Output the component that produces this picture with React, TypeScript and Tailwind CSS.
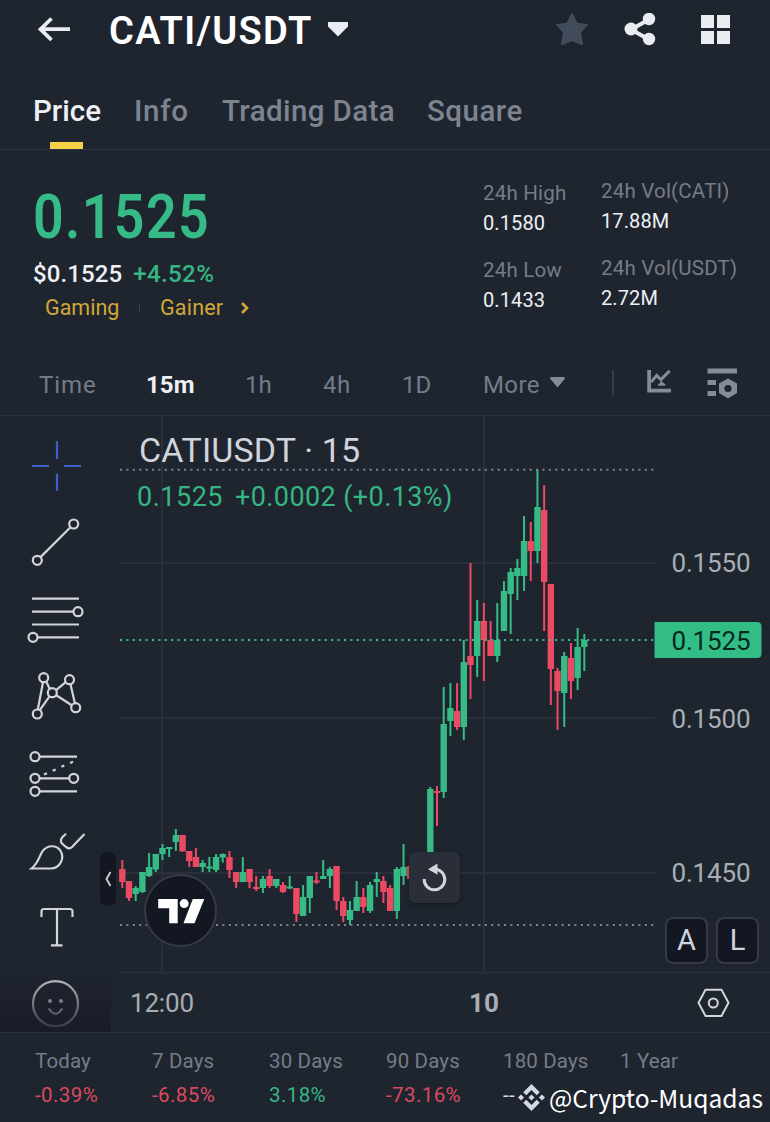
import clsx from "clsx";
import type { ReactNode } from "react";
import { SiBinance } from "react-icons/si";

type Candle = [high: number, low: number, top: number, bottom: number, up: 0 | 1];

const FIRST_X = 122.3;
const STEP = 6.696;
const CHART_TOP = 416;

const candles: (Candle | null)[] = [
  [860, 888, 869, 882, 0],
  [881, 901, 881, 898, 0],
  [886, 901, 888, 894, 1],
  [872, 893, 872, 892, 1],
  [853, 877, 867, 876, 1],
  [854, 872, 854, 869.5, 1],
  [844, 860, 848, 854, 1],
  [847, 857, 847, 849, 1],
  [829, 851, 835, 842, 1],
  [835, 851.5, 835, 851.5, 0],
  [851, 867, 851, 861, 0],
  [848, 867, 857, 867, 0],
  [860, 872, 863, 867, 1],
  [857, 872, 866.5, 868.5, 1],
  [854, 872, 857, 870, 1],
  [853.5, 862.5, 854, 857.5, 1],
  [851, 878, 857, 870, 0],
  [872, 888, 872, 882, 0],
  [857, 882, 872, 882, 1],
  [869, 888, 869, 882, 0],
  [876, 891, 887, 889, 0],
  [876, 893, 879, 888, 1],
  [869, 888, 876, 886, 0],
  [879, 888, 879, 886, 1],
  [882, 893, 885, 892, 0],
  [876, 889, 886.5, 888.5, 1],
  [888, 922, 888, 914, 0],
  [885, 916, 897, 916, 1],
  [876, 913, 876, 898, 1],
  [872, 884, 880.5, 882.5, 0],
  [860, 879, 876, 879, 1],
  [867, 888, 869, 876, 1],
  [866, 910, 866, 901, 0],
  [897, 922, 901, 916, 0],
  [901, 925, 910, 920, 1],
  [881, 911, 897, 911, 1],
  [888, 913, 897, 907, 0],
  [882, 913, 885, 911, 1],
  [872, 897, 879, 882, 1],
  [876, 903, 881, 892, 0],
  [885, 911, 888, 911, 0],
  [867, 919, 869, 911, 1],
  [844, 885, 867, 876, 1],
  [866, 879, 866, 879, 0],
  null,
  null,
  [787, 852, 789, 852, 1],
  [786, 826, 791, 793, 0],
  [687, 798, 724, 792, 1],
  [683, 736, 708, 721, 1],
  [683, 730, 711, 727, 0],
  [640, 740, 662, 727, 1],
  [563, 699, 656, 665, 0],
  [600, 677, 621, 656, 1],
  [603, 681, 621, 640, 0],
  [621, 656, 640, 656, 0],
  [603, 662, 640, 656, 1],
  [581, 631, 591, 631, 1],
  [568, 634, 572, 594, 1],
  [559, 600, 568, 576, 1],
  [516, 591, 541, 576, 1],
  [522, 581, 541, 551, 0],
  [470, 563, 507, 551, 1],
  [485, 631, 510, 582, 0],
  [584, 705, 584, 669, 0],
  [668, 730, 671, 691, 0],
  [652, 727, 656, 693, 1],
  [643, 699, 658, 681, 0],
  [628, 690, 647, 678, 1],
  [634, 671, 640, 647, 1],
];

const performance = [
  { label: "Today", value: "-0.39%", tone: "text-[#d9495f]" },
  { label: "7 Days", value: "-6.85%", tone: "text-[#d9495f]" },
  { label: "30 Days", value: "3.18%", tone: "text-[#35b582]" },
  { label: "90 Days", value: "-73.16%", tone: "text-[#d9495f]" },
  { label: "180 Days", value: "--", tone: "text-[#d5d9e0]" },
  { label: "1 Year", value: "--", tone: "text-[#d5d9e0]" },
];

function Header() {
  return (
    <header className="flex h-[60px] items-center">
      <svg className="ml-[37px] h-[28px] w-[34px]" viewBox="0 0 34 28" fill="none" stroke="#e9ecf1" strokeWidth="3.8">
        <path d="M14.5 2.5 3.5 13.2l11 10.8M3.5 13.2H33" />
      </svg>
      <h1 className="ml-[38px] w-[203px] whitespace-nowrap pt-[2px] text-[38px] font-semibold leading-none tracking-[1.3px] text-white">
        CATI/USDT
      </h1>
      <svg className="ml-[15px] h-[16px] w-[22px]" viewBox="0 0 22 16" fill="#e9ecf1">
        <path d="M1 0h20v4.5L11 14.5 1 4.5z" />
      </svg>
      <svg className="ml-[206px] h-[34px] w-[34px]" viewBox="0 0 34 34" fill="#434c5a" stroke="#434c5a" strokeWidth="1.6" strokeLinejoin="round">
        <path d="M17 1 22 10.500l10.200 1.200-7 7.600 2 12.200-10.200-4.200-10.200 4.200 2-12.200-7-7.600L12 10.500z" />
      </svg>
      <svg className="ml-[35px] h-[34px] w-[34px]" viewBox="0 0 34 34" fill="#e9ecf1">
        <path d="M25 6.500 7 16.500l18 10" fill="none" stroke="#e9ecf1" strokeWidth="4" />
        <circle cx="25" cy="6" r="6.2" />
        <circle cx="7" cy="16" r="6.5" />
        <circle cx="25" cy="26" r="6.2" />
      </svg>
      <div className="ml-[43px] grid grid-cols-2 gap-[3px] pb-[2px]">
        {[0, 1, 2, 3].map((n) => (
          <span key={n} className="size-[13px] bg-[#e9ecf1]" />
        ))}
      </div>
    </header>
  );
}

function Tabs() {
  return (
    <nav className="flex h-[90px] border-b border-[#2d343f] text-[29.5px] font-medium leading-[30px] text-[#7d8490]">
      <div className="ml-[33px] flex w-[101px] flex-col pt-[36px] text-[#eef0f4]">
        <span>Price</span>
        <span className="ml-[17px] mt-[16px] h-[7px] w-[33px] bg-[#f5d147]" />
      </div>
      <span className="w-[88px] pt-[36px] tracking-[0.7px]">Info</span>
      <span className="w-[205px] whitespace-nowrap pt-[36px] tracking-[0.4px]">Trading Data</span>
      <span className="pt-[36px] tracking-[0.5px]">Square</span>
    </nav>
  );
}

function Stat({ label, value }: { label: string; value: string }) {
  return (
    <div className="h-[77px] whitespace-nowrap leading-[30px]">
      <p className="text-[20.5px] tracking-[0.2px] text-[#757c89]">{label}</p>
      <p className="text-[20px] tracking-[0.1px] text-[#eef0f4]">{value}</p>
    </div>
  );
}

function Summary() {
  return (
    <section className="flex h-[200px]">
      <div className="w-[450px] pl-[33px] pt-[36px]">
        <p className="origin-left scale-x-[0.88] text-[61px] font-semibold leading-[62px] tracking-[1.6px] text-[#36bb86]">
          0.1525
        </p>
        <p className="mt-[11px] flex gap-[11px] text-[24px] font-medium leading-[30px]">
          <span className="tracking-[0.1px] text-[#eef0f4]">$0.1525</span>
          <span className="tracking-[0.4px] text-[#36b582]">+4.52%</span>
        </p>
        <p className="mt-[4px] flex items-center pl-[12px] text-[21.5px] leading-[30px] text-[#d0a935]">
          <span className="w-[94px]">Gaming</span>
          <span className="h-[10px] w-px bg-[#3a414d]" />
          <span className="ml-[20px] w-[80px] tracking-[0.2px]">Gainer</span>
          <svg className="size-[12px]" viewBox="0 0 12 12" fill="none" stroke="#d0a935" strokeWidth="2.6">
            <path d="m2 1 5 5-5 5" />
          </svg>
        </p>
      </div>
      <div className="ml-[33px] w-[118px] pt-[28px]">
        <Stat label="24h High" value="0.1580" />
        <Stat label="24h Low" value="0.1433" />
      </div>
      <div className="pt-[26px]">
        <Stat label="24h Vol(CATI)" value="17.88M" />
        <Stat label="24h Vol(USDT)" value="2.72M" />
      </div>
    </section>
  );
}

function Intervals() {
  return (
    <div className="flex h-[66px] items-center border-b border-[#2a313b] pl-[39px] pt-[4px] text-[24px] text-[#757c89]">
      <span className="w-[107px] tracking-[0.9px]">Time</span>
      <span className="w-[99px] font-bold tracking-[0.1px] text-[#eef0f4]">15m</span>
      <span className="w-[78px]">1h</span>
      <span className="w-[79px] tracking-[0.5px]">4h</span>
      <span className="w-[81px]">1D</span>
      <span className="w-[67px] tracking-[0.4px]">More</span>
      <svg className="mb-[5px] h-[11px] w-[15px]" viewBox="0 0 15 11" fill="#858c98">
        <path d="M1 0h13q1 0 1 1.500L7.500 10.500 0 1.500Q0 0 1 0z" />
      </svg>
      <span className="mb-[5px] ml-[47px] h-[25px] w-[1.5px] bg-[#363d49]" />
      <svg className="mb-[7px] ml-[33px] h-[24px] w-[24px]" viewBox="0 0 26 26" fill="none" stroke="#858c98" strokeWidth="4">
        <path d="M2.300 1v22.500H26" />
        <path d="m4.500 14 6-7 4.500 4.500L24.500 2" strokeWidth="3.2" />
        <path d="m12 17.500 4-4 4 4z" fill="#858c98" strokeWidth="1" />
      </svg>
      <svg className="mb-[3px] ml-[36px] h-[32px] w-[31px]" viewBox="0 0 31 32">
        <path d="M.5 1.500H30v5H.5zM.5 13H9v5H.5zM.5 24H9v5H.5z" fill="#858c98" />
        <path d="m21 11.500 9 5V26l-9 5.500-9-5.500v-9.500z" fill="#858c98" />
        <circle cx="21" cy="21.500" r="3.6" fill="#1f252f" />
      </svg>
    </div>
  );
}

function Tool({ children }: { children: ReactNode }) {
  return (
    <svg
      className="h-[77px] w-[112px] shrink-0"
      viewBox="0 0 112 77"
      fill="none"
      stroke="#d1d4dc"
      strokeWidth="2.2"
    >
      {children}
    </svg>
  );
}

function Toolbar() {
  return (
    <aside className="relative flex w-[111px] shrink-0 flex-col overflow-hidden pt-[11px]">
      <Tool>
        <path d="M57 14.300V32M57 46.700v17M32 39h17M64 39h17" stroke="#3b62c9" />
      </Tool>
      <Tool>
        <circle cx="37.3" cy="56.3" r="4.5" />
        <circle cx="73.7" cy="20" r="4.5" />
        <path d="M40.500 53.100 70.500 23.200" />
      </Tool>
      <Tool>
        <path d="M32 17.700h47M32 30.700h41.500M32 43.500h47M37.500 56.300H79" />
        <circle cx="78" cy="30.7" r="4.5" />
        <circle cx="33" cy="56.3" r="4.5" />
      </Tool>
      <Tool>
        <circle cx="43.7" cy="19.7" r="4.5" />
        <circle cx="69.5" cy="21.7" r="4.5" />
        <circle cx="52.3" cy="34.7" r="4.5" />
        <circle cx="75.7" cy="49.7" r="4.5" />
        <circle cx="37.3" cy="56" r="4.5" />
        <path d="m43 24.200-5.200 27.300M46.200 23.500l3.600 7.400M56 32.200l9.800-8M70.500 26.200l4.400 19M56.200 37.200l15.600 10M49.500 38.300 39.800 52.200" />
      </Tool>
      <Tool>
        <circle cx="35" cy="21.7" r="4.5" />
        <circle cx="35" cy="43.3" r="4.5" />
        <circle cx="73.7" cy="43.3" r="4.5" />
        <circle cx="35" cy="56.3" r="4.5" />
        <path d="M39.500 21.700H77M39.500 43.300h29.700M39.500 56.300H77" />
        <path d="m44 39.500 33-14.500" strokeDasharray="3.2 6.3" />
      </Tool>
      <Tool>
        <path d="M31.500 56.500C39.500 50 39.500 42 43.500 38c4-4.500 12-5.500 16.500 0 5.500 8 0 18.500-9.500 18.500z" />
        <path d="M66 21.800 62.500 25c-2 2-2 5-.5 6.500l4 3.500c2 1.500 4.500 1.500 6 0L84.500 22" />
      </Tool>
      <Tool>
        <path d="M41.500 28v-5.500q0-2.500 2.500-2.500h26q2.500 0 2.500 2.500V28M57 20v36.200M51 56.300h11.500" />
      </Tool>
      <Tool>
        <circle cx="55.5" cy="37.7" r="22.5" />
        <circle cx="50" cy="35" r="2" fill="#d1d4dc" stroke="none" />
        <circle cx="61" cy="35" r="2" fill="#d1d4dc" stroke="none" />
        <path d="M48.800 42.500q6.700 10.500 13.400 0" />
      </Tool>
      <div className="absolute inset-x-0 bottom-0 h-[64px] bg-linear-to-b from-[#171b26]/0 to-[#171b26]/90" />
    </aside>
  );
}

function PriceChart() {
  return (
    <svg className="block h-[616px] w-[659px]" viewBox={`111 ${CHART_TOP} 659 616`}>
      <path d="M120 563h535M120 718h535M120 873h535M162.200 416v556M484 416v556" stroke="#2a303b" strokeWidth="2" />
      <path d="M120 972.500h650" stroke="#2a303b" strokeWidth="2" />
      <path d="M120 469.700h535M120 925h535" stroke="#7d828d" strokeWidth="2" strokeDasharray="2.1 4.3" />
      {candles.map((candle, i) => {
        if (!candle) {
          return null;
        }
        const [high, low, top, bottom, up] = candle;
        const x = FIRST_X + i * STEP;
        return (
          <g key={i} fill={up ? "#36bb86" : "#ec4a62"}>
            <rect x={x - 1} y={high} width="2" height={low - high} />
            <rect x={x - 3.2} y={top} width="6.4" height={bottom - top} />
          </g>
        );
      })}
      <path d="M120 640h535" stroke="#36bb86" strokeWidth="2" strokeDasharray="2.1 4.3" />

      <path d="M654.500 622H757q4.500 0 4.500 4.500v27q0 4.500-4.500 4.500H654.500z" fill="#32bd87" />
      <g className="font-[Roboto]" fontSize="26" fill="#a9adb6">
        <text x="671.5" y="572" textLength="79">0.1550</text>
        <text x="671.5" y="650" textLength="79" fill="#06291b">0.1525</text>
        <text x="671.5" y="727.5" textLength="79">0.1500</text>
        <text x="671.5" y="882" textLength="79">0.1450</text>
        <text x="130" y="1012" textLength="64">12:00</text>
        <text x="469" y="1012" textLength="30" fontWeight="700">10</text>
      </g>
      <g fill="none" stroke="#d1d4dc" strokeWidth="2">
        <path d="M705.500 989.800h16l7 13-7 13.200h-16l-7-13.200z" />
        <circle cx="713.3" cy="1003" r="4.5" />
      </g>
    </svg>
  );
}

function ScaleButton({ children }: { children: string }) {
  return (
    <button
      type="button"
      className="flex h-[47px] w-[43px] items-center justify-center rounded-[8px] border-2 border-[#363a45] bg-[#131722] text-[29px] leading-none text-[#d1d4dc]"
    >
      {children}
    </button>
  );
}

function Chart() {
  return (
    <section className="relative flex h-[616px]">
      <Toolbar />
      <PriceChart />

      <div className="absolute left-[139px] top-[15px] whitespace-nowrap">
        <p className="text-[34px] leading-[38px] tracking-[0.15px] text-[#d1d4dc]">CATIUSDT · 15</p>
        <p className="-ml-[2px] mt-[13px] flex gap-[12px] text-[27px] leading-[30px] text-[#36b582]">
          <span className="tracking-[0.5px]">0.1525</span>
          <span className="tracking-[0.4px]">+0.0002 (+0.13%)</span>
        </p>
      </div>

      <div className="absolute left-[99px] top-[435px] flex h-[56px] w-[18px] items-center justify-center rounded-[8px] border border-[#20242f] bg-[#131722]">
        <svg className="h-[16px] w-[7px]" viewBox="0 0 7 16" fill="none" stroke="#c5c8d0" strokeWidth="2">
          <path d="M5.500 1 1.500 8l4 7" />
        </svg>
      </div>

      <div className="absolute left-[144px] top-[458px] size-[73px] rounded-full border-2 border-[#363a45] bg-[#131722]">
        <svg className="size-[69px]" viewBox="146 876 69 69" fill="#fff">
          <path d="M158.200 899h19.500v24.200h-8.500V908.200h-11zM192.800 899h11.500l-9.800 24.200h-11z" />
          <circle cx="184.2" cy="903.6" r="4.5" />
        </svg>
      </div>

      <div className="absolute left-[409px] top-[436px] flex size-[51px] items-center justify-center rounded-[7px] bg-[#2a2e39] shadow-[0_2px_4px_rgba(0,0,0,0.35)]">
        <svg className="size-[30px]" viewBox="0 0 30 30" fill="none" stroke="#d1d4dc" strokeWidth="3">
          <path d="M4.200 16a10.300 10.300 0 1 0 10.800-9.800" />
          <path d="M8 6.200 17.500.5v11.300z" fill="#d1d4dc" stroke="none" />
        </svg>
      </div>

      <div className="absolute left-[665px] top-[501px] flex gap-[8px]">
        <ScaleButton>A</ScaleButton>
        <ScaleButton>L</ScaleButton>
      </div>
    </section>
  );
}

function Performance() {
  return (
    <footer className="relative h-[90px] border-t border-[#2a313b] pl-[35px] pt-[13px]">
      <div className="grid grid-cols-[repeat(6,117px)] whitespace-nowrap text-[20.5px] leading-[30px]">
        {performance.map(({ label, value, tone }) => (
          <div key={label}>
            <p className="tracking-[0.15px] text-[#757c89]">{label}</p>
            <p className={clsx("mt-[4px] text-[20.5px] tracking-[0.4px]", tone)}>{value}</p>
          </div>
        ))}
      </div>
      <div className="absolute left-[518px] top-[46px] flex items-center gap-[4px] whitespace-nowrap font-['Noto_Sans_CJK_SC','Noto_Sans',sans-serif] text-[24.6px] leading-[36px] text-white">
        <SiBinance aria-hidden="true" className="size-[27px] text-[#d5d9e5]" />
        @Crypto-Muqadas
      </div>
    </footer>
  );
}

export default function App() {
  return (
    <main className="h-[1122px] w-[770px] overflow-hidden bg-[#1f252f] font-[Roboto,sans-serif]">
      <Header />
      <Tabs />
      <Summary />
      <Intervals />
      <Chart />
      <Performance />
    </main>
  );
}
